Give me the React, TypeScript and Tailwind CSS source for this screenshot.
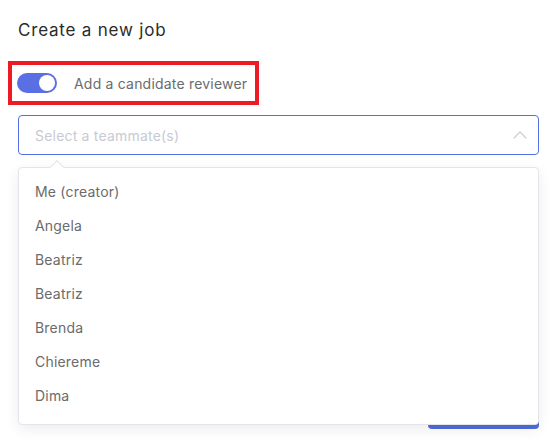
import { ChevronUp } from "lucide-react";

const teammates = [
  "Me (creator)",
  "Angela",
  "Beatriz",
  "Beatriz",
  "Brenda",
  "Chiereme",
  "Dima",
  "Ekaterina Vasquez-Whitfield (hiring manager)",
  "Fatima",
];

export default function App() {
  return (
    <div className="relative h-[446px] w-[555px] overflow-hidden bg-white font-['Inter',sans-serif]">
      <div className="pl-[18px] pr-[16px] pt-[18px]">
        <h1 className="text-[17px] leading-[24px] tracking-[0.8px] text-[#2b2b2b]">Create a new job</h1>

        <div className="-ml-[10px] mt-[19px] flex h-[44px] w-[251px] items-center border-4 border-[#ed1c24] pl-[5px]">
          <div className="flex h-[20px] w-[40px] items-center justify-end rounded-full bg-[#5a6fe3] pr-[2px]">
            <div className="h-[16px] w-[16px] rounded-full bg-white" />
          </div>
          <span className="ml-[17px] text-[14px] tracking-[0.2px] text-[#6b6b6b]">Add a candidate reviewer</span>
        </div>

        <div className="relative mt-[10px]">
          <div className="flex h-[40px] items-center justify-between rounded-[4px] border border-[#5470e6] pl-[16px] pr-[6px]">
            <span className="text-[14px] tracking-[0.2px] text-[#c8cad3]">Select a teammate(s)</span>
            <ChevronUp className="h-[24px] w-[24px] text-[#ccced4]" strokeWidth={1.2} />
          </div>

          <div className="mt-[234px] flex justify-end">
            <button className="h-[40px] w-[111px] rounded-[4px] bg-[#4f6ddb] text-[14px] text-white">Create</button>
          </div>

          <div className="absolute left-0 right-0 top-[52px] rounded-[4px] border border-[#e4e5ea] bg-white shadow-[0_4px_14px_rgba(0,0,0,0.08)]">
            <div className="absolute -top-[6px] left-[33px] h-[10px] w-[10px] rotate-45 border-l border-t border-[#e4e5ea] bg-white" />
            <div className="relative h-[256px] overflow-hidden pt-[6px]">
              {teammates.map((name, i) => (
                <div key={i} className="flex h-[34px] items-center pl-[16px] text-[14px] tracking-[0.2px] text-[#6b6b6b]">
                  {name}
                </div>
              ))}
            </div>
          </div>
        </div>
      </div>
    </div>
  );
}
